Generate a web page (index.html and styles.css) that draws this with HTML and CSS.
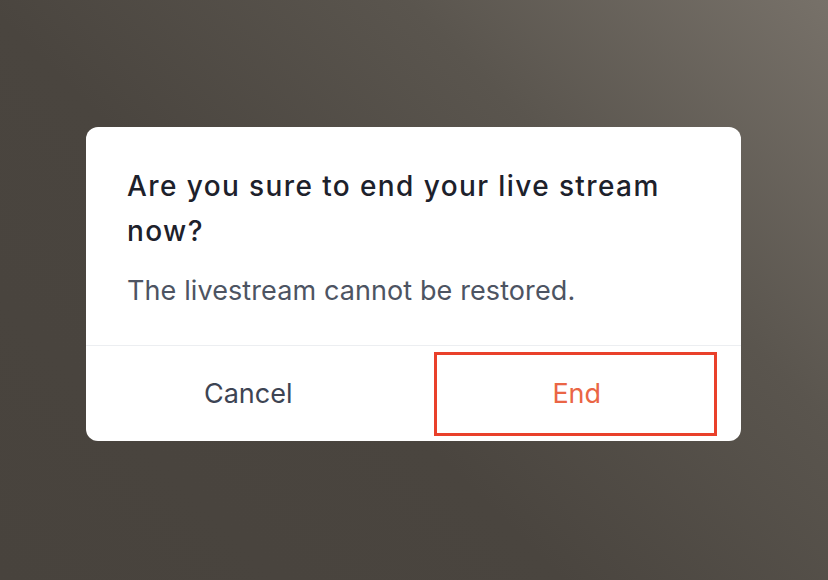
FILE: index.html
```html
<!DOCTYPE html>
<html lang="en">
<head>
  <meta charset="UTF-8">
  <title>End live stream</title>
  <link rel="stylesheet" href="styles.css">
</head>
<body>
  <div class="backdrop">
    <div class="dialog">
      <div class="dialog-body">
        <h2 class="dialog-title">Are you sure to end your live stream now?</h2>
        <p class="dialog-text">The livestream cannot be restored.</p>
      </div>
      <div class="dialog-actions">
        <button class="action cancel">Cancel</button>
        <button class="action end">End</button>
      </div>
      <div class="highlight"></div>
    </div>
  </div>
</body>
</html>
```

FILE: styles.css
```css
*{
  margin:0;
  padding:0;
  box-sizing: border-box;
}
html, body{
  height: 100%;
}
body {
  font-family: Inter, 'Noto Sans', sans-serif;
  background: #4b4640;
}
.backdrop{
  width: 828px;
  height: 580px;
  background: linear-gradient(225deg, #777169 0%, #5a554e 30%, #4a453f 60%, #48433d 100%);
  padding-top: 127px;
  padding-left: 86px;
}
.dialog{
  position: relative;
  width: 655px;
  height: 314px;
  background: #fff;
  border-radius: 12px;
  display: flex;
  flex-direction: column;
}
.dialog-body{
  padding: 37px 50px 0 41px;
  height: 219px;
  border-bottom: 1px solid #eceef1;
}
.dialog-title{
  font-size: 28px;
  font-weight: 500;
  line-height: 45px;
  color: #1d212b;
  letter-spacing: 1.4px;
}
.dialog-text{
  margin-top: 20px;
  font-size: 27px;
  line-height: 34px;
  color: #4d5462;
  letter-spacing: 0.1px;
}
.dialog-actions{
  display: flex;
  flex: 1;
}
.action{
  flex: 1;
  border: none;
  background: none;
  font-family: inherit;
  font-size: 27px;
  font-weight: 400;
}
.cancel{
  color: #3d4453;
  padding-right: 4px;
}
.end{
  color: #ea6545;
  padding-right: 2px;
}
.highlight{
  position: absolute;
  left: 348px;
  top: 225px;
  width: 283px;
  height: 84px;
  border: 3px solid #e9402a;
}
```
